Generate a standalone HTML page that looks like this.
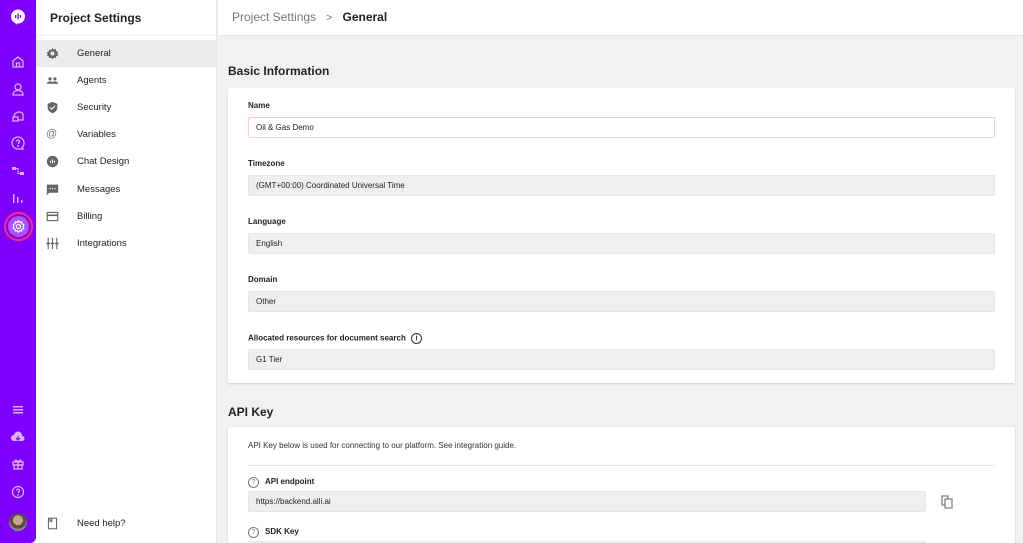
<!DOCTYPE html>
<html style="overflow:hidden;width:1023px;height:543px"><head><meta charset="utf-8"><style>
*{box-sizing:border-box;margin:0;padding:0}
body{width:1023px;height:543px;overflow:hidden;background:#f1f1f1;font-family:"Liberation Sans",sans-serif;color:#222;position:relative}
.rail{position:absolute;left:0;top:0;width:36px;height:543px;background:#7f00ff;border-radius:0 0 6px 0}
.ri{position:absolute;left:10px;width:16px;height:16px}
.nav{position:absolute;left:36px;top:0;width:181px;height:543px;background:#fff;border-right:1px solid #e4e4e4}
.nav h1{font-size:12px;font-weight:bold;position:absolute;left:14px;top:11px;color:#222}
.nav .sep{position:absolute;left:0;right:0;top:35px;border-top:1px solid #ececec}
.item{position:absolute;left:0;width:180px;height:27px;font-size:9.5px;line-height:27px;padding-left:41px;color:#222}
.item.act{background:#ececec}
.ic{position:absolute;left:10px;top:7px;width:13px;height:13px}
.top{position:absolute;left:218px;top:0;right:0;height:36px;background:#fff;border-bottom:1px solid #e6e6e6;font-size:12px;line-height:35px;padding-left:14px;color:#777}
.top b{color:#222}
h2{position:absolute;left:228px;font-size:12px;font-weight:bold;color:#222}
.card{position:absolute;left:228px;width:787px;background:#fff;border-radius:2px;box-shadow:0 1px 2px rgba(0,0,0,.15)}
.lab{position:absolute;left:20px;font-size:8px;font-weight:bold;color:#222}
.inp{position:absolute;left:20px;width:747px;height:21px;background:#efefef;border:1px solid #e6e6e6;border-radius:2px;font-size:8px;line-height:19px;padding-left:7px;color:#222}
</style></head><body>
<div class="rail">
<svg class="ri" style="top:9px" viewBox="0 0 16 16"><circle cx="8" cy="7.5" r="7" fill="#fff"/><path d="M6 16l2-3h-3z" fill="#fff"/><rect x="5" y="6" width="1.3" height="3" fill="#7f00ff"/><rect x="7.4" y="4.5" width="1.3" height="6" fill="#7f00ff"/><rect x="9.8" y="6" width="1.3" height="3" fill="#7f00ff"/></svg>
<svg class="ri" style="top:54px" viewBox="0 0 16 16" fill="none" stroke="#d9b3ff" stroke-width="1.3"><path d="M3 7l5-4 5 4v6H3z"/><path d="M6.5 13V9h3v4"/></svg>
<svg class="ri" style="top:81px" viewBox="0 0 16 16" fill="none" stroke="#d9b3ff" stroke-width="1.3"><circle cx="8" cy="6" r="3"/><path d="M3 14c0-3 2-4.5 5-4.5s5 1.5 5 4.5z"/></svg>
<svg class="ri" style="top:108px" viewBox="0 0 16 16" fill="none" stroke="#d9b3ff" stroke-width="1.3"><path d="M4 9a5 5 0 0 1 9-3v6H8"/><rect x="3" y="9" width="5" height="4"/></svg>
<svg class="ri" style="top:135px" viewBox="0 0 16 16" fill="none" stroke="#d9b3ff" stroke-width="1.3"><path d="M8 14a6 6 0 1 1 4-1.5L13 14z"/><path d="M6.5 6.5a1.5 1.5 0 1 1 2 1.4V9"/><circle cx="8" cy="11" r=".4"/></svg>
<svg class="ri" style="top:163px" viewBox="0 0 16 16" fill="#d9b3ff"><rect x="2" y="4" width="4" height="3"/><rect x="10" y="9" width="4" height="3"/><path d="M6 5.5h2v5h2" stroke="#d9b3ff" fill="none"/></svg>
<svg class="ri" style="top:190px" viewBox="0 0 16 16" fill="#d9b3ff"><rect x="3" y="4" width="1.5" height="9"/><rect x="7" y="7" width="1.5" height="6"/><rect x="11" y="10" width="1.5" height="3"/></svg>
<div style="position:absolute;left:4px;top:212px;width:29px;height:29px;border-radius:50%;border:2px solid #ff2a6d;background:#7f00ff"></div>
<div style="position:absolute;left:8px;top:216px;width:21px;height:21px;border-radius:50%;background:#a855ff"></div>
<svg class="ri" style="top:219px;left:11px;width:15px;height:15px" viewBox="0 0 16 16" fill="none" stroke="#fff" stroke-width="1.3"><circle cx="8" cy="8" r="2.2"/><path d="M8 2l1.3 1.6 2-.5.5 2L13.6 6 13 8l.6 2-1.8.9-.5 2-2-.5L8 14l-1.3-1.6-2 .5-.5-2L2.4 10 3 8l-.6-2 1.8-.9.5-2 2 .5z"/></svg>
<svg class="ri" style="top:402px" viewBox="0 0 16 16" fill="#d9b3ff"><rect x="3" y="4" width="10" height="1.5"/><rect x="3" y="7" width="10" height="1.5"/><rect x="3" y="10" width="10" height="1.5"/></svg>
<svg class="ri" style="top:429px" viewBox="0 0 16 16" fill="#d9b3ff"><path d="M4 12a3 3 0 0 1 0-6 4 4 0 0 1 8 1 2.5 2.5 0 0 1 0 5z"/><path d="M8 7v4M6 9l2 2 2-2" stroke="#7f00ff" stroke-width="1.2" fill="none"/></svg>
<svg class="ri" style="top:456px" viewBox="0 0 16 16" fill="none" stroke="#d9b3ff" stroke-width="1.3"><rect x="3" y="6" width="10" height="3"/><rect x="4" y="9" width="8" height="4"/><path d="M8 6v7M8 6C6 3 4 4 5.5 6M8 6c2-3 4-2 2.5 0"/></svg>
<svg class="ri" style="top:484px" viewBox="0 0 16 16" fill="none" stroke="#d9b3ff" stroke-width="1.2"><circle cx="8" cy="8" r="5.5"/><path d="M6.6 6.6a1.4 1.4 0 1 1 1.9 1.3V9.3"/><circle cx="8" cy="11" r=".3"/></svg>
<div style="position:absolute;left:9px;top:513px;width:18px;height:18px;border-radius:50%;background:radial-gradient(circle at 50% 40%,#c9a48a 0 35%,#5a4a40 36% 60%,#8a8a8a 61%)"></div>
</div>
<div class="nav">
<h1>Project Settings</h1><div class="sep"></div>
<div class="item act" style="top:40px"><svg class="ic" viewBox="0 0 16 16" fill="#666"><path d="M8 1l1.5 2 2.4-.6.6 2.4L15 6.5 14 8.5l1 2-2.5 1-.6 2.4-2.4-.6L8 15l-1.5-1.7-2.4.6-.6-2.4L1 10.5l1-2-1-2 2.5-1 .6-2.4 2.4.6z"/><circle cx="8" cy="8" r="2.5" fill="#ececec"/></svg>General</div>
<div class="item" style="top:67px"><svg class="ic" viewBox="0 0 16 16" fill="#666"><circle cx="5" cy="6" r="2"/><circle cx="11" cy="6" r="2"/><path d="M1 12c0-2 2-3 4-3s4 1 4 3zM7 12c0-2 2-3 4-3s4 1 4 3z"/></svg>Agents</div>
<div class="item" style="top:94px"><svg class="ic" viewBox="0 0 16 16" fill="#666"><path d="M8 1l6 2.5V8c0 3.5-3 6-6 7-3-1-6-3.5-6-7V3.5z"/><path d="M5 8l2 2 4-4" stroke="#fff" stroke-width="1.4" fill="none"/></svg>Security</div>
<div class="item" style="top:121px"><span class="ic" style="top:0;font-size:11px;color:#777">@</span>Variables</div>
<div class="item" style="top:148px"><svg class="ic" viewBox="0 0 16 16"><circle cx="8" cy="8" r="7" fill="#666"/><rect x="5" y="7" width="1.2" height="2.5" fill="#fff"/><rect x="7.4" y="5.5" width="1.2" height="5" fill="#fff"/><rect x="9.8" y="7" width="1.2" height="2.5" fill="#fff"/></svg>Chat Design</div>
<div class="item" style="top:176px"><svg class="ic" viewBox="0 0 16 16" fill="#666"><path d="M1 2h14v10H4l-3 3z"/><circle cx="5" cy="7" r=".8" fill="#fff"/><circle cx="8" cy="7" r=".8" fill="#fff"/><circle cx="11" cy="7" r=".8" fill="#fff"/></svg>Messages</div>
<div class="item" style="top:203px"><svg class="ic" viewBox="0 0 16 16" fill="none" stroke="#666" stroke-width="1.4"><rect x="1.5" y="3" width="13" height="10"/><path d="M1.5 6.5h13" stroke-width="2"/></svg>Billing</div>
<div class="item" style="top:230px"><svg class="ic" viewBox="0 0 16 16" fill="#666"><rect x="2" y="1" width="1.4" height="14"/><rect x="7.3" y="1" width="1.4" height="14"/><rect x="12.6" y="1" width="1.4" height="14"/><rect x="0.5" y="7" width="4.4" height="2"/><rect x="5.8" y="7" width="4.4" height="2"/><rect x="11.1" y="7" width="4.4" height="2"/></svg>Integrations</div>
<div class="item" style="top:510px"><svg class="ic" viewBox="0 0 16 16" fill="none" stroke="#666" stroke-width="1.3"><rect x="3" y="1.5" width="10" height="13"/><path d="M5 1.5v4l1-1 1 1v-4"/></svg>Need help?</div>
</div>
<div class="top">Project Settings &nbsp;&nbsp;<span style="font-size:11px">&gt;</span>&nbsp;&nbsp; <b>General</b></div>
<h2 style="top:64px">Basic Information</h2>
<div class="card" style="top:88px;height:295px">
<div class="lab" style="top:13px">Name</div>
<div class="inp" style="top:29px;background:#fff;border-color:#ffc8da">Oil &amp; Gas Demo</div>
<div class="lab" style="top:71px">Timezone</div>
<div class="inp" style="top:87px">(GMT+00:00) Coordinated Universal Time</div>
<div class="lab" style="top:129px">Language</div>
<div class="inp" style="top:145px">English</div>
<div class="lab" style="top:187px">Domain</div>
<div class="inp" style="top:203px">Other</div>
<div class="lab" style="top:245px">Allocated resources for document search <span style="display:inline-block;width:11px;height:11px;border:1px solid #333;border-radius:50%;text-align:center;font-size:7px;line-height:9px;vertical-align:middle;margin-left:3px">i</span></div>
<div class="inp" style="top:261px">G1 Tier</div>
</div>
<h2 style="top:405px">API Key</h2>
<div class="card" style="top:427px;height:116px;overflow:hidden">
<div style="position:absolute;left:20px;top:14px;font-size:8px;color:#333">API Key below is used for connecting to our platform. See integration guide.</div>
<div style="position:absolute;left:20px;right:20px;top:38px;border-top:1px solid #e4e4e4"></div>
<div class="lab" style="top:50px"><span style="display:inline-block;width:11px;height:11px;border:1px solid #777;border-radius:50%;text-align:center;font-size:7px;line-height:9px;color:#777;margin-right:6px;font-weight:normal">?</span>API endpoint</div>
<div class="inp" style="top:64px;width:678px">https://backend.alli.ai</div>
<svg style="position:absolute;left:713px;top:68px" width="12" height="14" viewBox="0 0 12 14" fill="none" stroke="#777" stroke-width="1.2"><rect x="1" y="1" width="6" height="9"/><rect x="4" y="4" width="7" height="9" fill="#fff"/></svg>
<div class="lab" style="top:100px"><span style="display:inline-block;width:11px;height:11px;border:1px solid #777;border-radius:50%;text-align:center;font-size:7px;line-height:9px;color:#777;margin-right:6px;font-weight:normal">?</span>SDK Key</div>
<div class="inp" style="top:114px;width:678px"></div>
</div>
</body></html>
